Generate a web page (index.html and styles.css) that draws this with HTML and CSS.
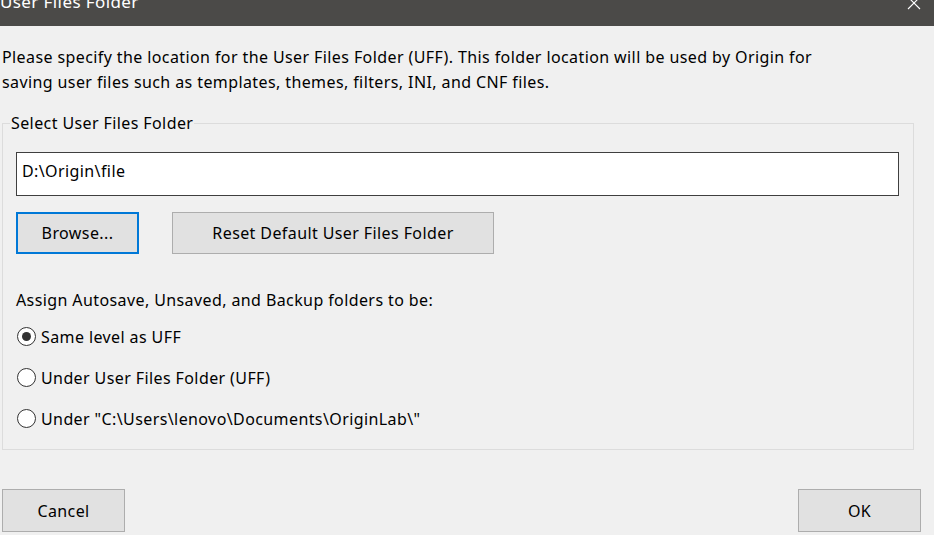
FILE: index.html
```html
<!DOCTYPE html>
<html>
<head>
<meta charset="utf-8">
<link rel="stylesheet" href="styles.css">
</head>
<body>
<div class="dialog">
  <div class="titlebar">
    <span class="title">User Files Folder</span>
    <svg class="close" width="14" height="14" viewBox="0 0 14 14"><path d="M1 -3 L13 9 M13 -3 L1 9" stroke="#fff" stroke-width="1.1" fill="none"/></svg>
  </div>
  <p class="desc">Please specify the location for the User Files Folder (UFF). This folder location will be used by Origin for<br>saving user files such as templates, themes, filters, INI, and CNF files.</p>
  <fieldset class="group">
    <legend>Select User Files Folder</legend>
    <div class="input">D:\Origin\file</div>
    <div class="btnrow">
      <button class="btn browse">Browse...</button>
      <button class="btn reset">Reset Default User Files Folder</button>
    </div>
    <div class="assign">Assign Autosave, Unsaved, and Backup folders to be:</div>
    <div class="radios">
      <div class="radio"><span class="dot checked"></span>Same level as UFF</div>
      <div class="radio"><span class="dot"></span>Under User Files Folder (UFF)</div>
      <div class="radio"><span class="dot"></span>Under "C:\Users\lenovo\Documents\OriginLab\"</div>
    </div>
  </fieldset>
  <div class="footer">
    <button class="btn foot">Cancel</button>
    <button class="btn foot">OK</button>
  </div>
</div>
</body>
</html>
```
FILE: styles.css
```css
html, body {
  margin: 0;
  padding: 0;
  background: #f0f0f0;
}
body {
  width: 934px;
  height: 535px;
  overflow: hidden;
  font-family: "Noto Sans", "Open Sans", sans-serif;
  font-size: 16px;
  letter-spacing: 0.4px;
  color: #000;
}
.titlebar {
  height: 26px;
  background: #4b4a48;
  display: flex;
  justify-content: space-between;
  align-items: flex-start;
  overflow: hidden;
}
.title {
  color: #fff;
  font-size: 17px;
  line-height: 20px;
  margin-top: -8px;
}
.close {
  margin-right: 13px;
}
.desc {
  margin: 19px 0 0 2px;
  line-height: 25px;
}
.group {
  margin: 18px 0 0 2px;
  width: 912px;
  box-sizing: border-box;
  border: 1px solid #dcdcdc;
  padding: 19px 0 10px 13px;
}
.group legend {
  padding: 0 1px;
  margin-left: -6px;
  line-height: 20px;
}
.input {
  width: 883px;
  height: 44px;
  box-sizing: border-box;
  background: #fff;
  border: 1px solid #3f3f3f;
  padding: 0 5px 6px;
  display: flex;
  align-items: center;
}
.btnrow {
  display: flex;
  gap: 33px;
  margin-top: 16px;
}
.btn {
  font: inherit;
  letter-spacing: inherit;
  color: #000;
  background: #e1e1e1;
  border: 1px solid #adadad;
  height: 42px;
  padding: 0;
  margin: 0;
}
.browse {
  width: 123px;
  border: 2px solid #0078d7;
}
.reset {
  width: 322px;
}
.assign {
  margin-top: 36px;
  line-height: 20px;
}
.radios {
  margin-top: 6px;
  display: flex;
  flex-direction: column;
}
.radio {
  height: 41px;
  display: flex;
  align-items: center;
  gap: 5px;
  margin-left: 1px;
}
.dot {
  width: 17px;
  height: 17px;
  border: 1px solid #333;
  border-radius: 50%;
  background: #fff;
  display: flex;
  align-items: center;
  justify-content: center;
}
.dot.checked::after {
  content: "";
  width: 9px;
  height: 9px;
  border-radius: 50%;
  background: #333;
}
.footer {
  display: flex;
  justify-content: space-between;
  margin-top: 39px;
  padding: 0 13px 0 2px;
}
.foot {
  width: 123px;
  height: 43px;
}
```
